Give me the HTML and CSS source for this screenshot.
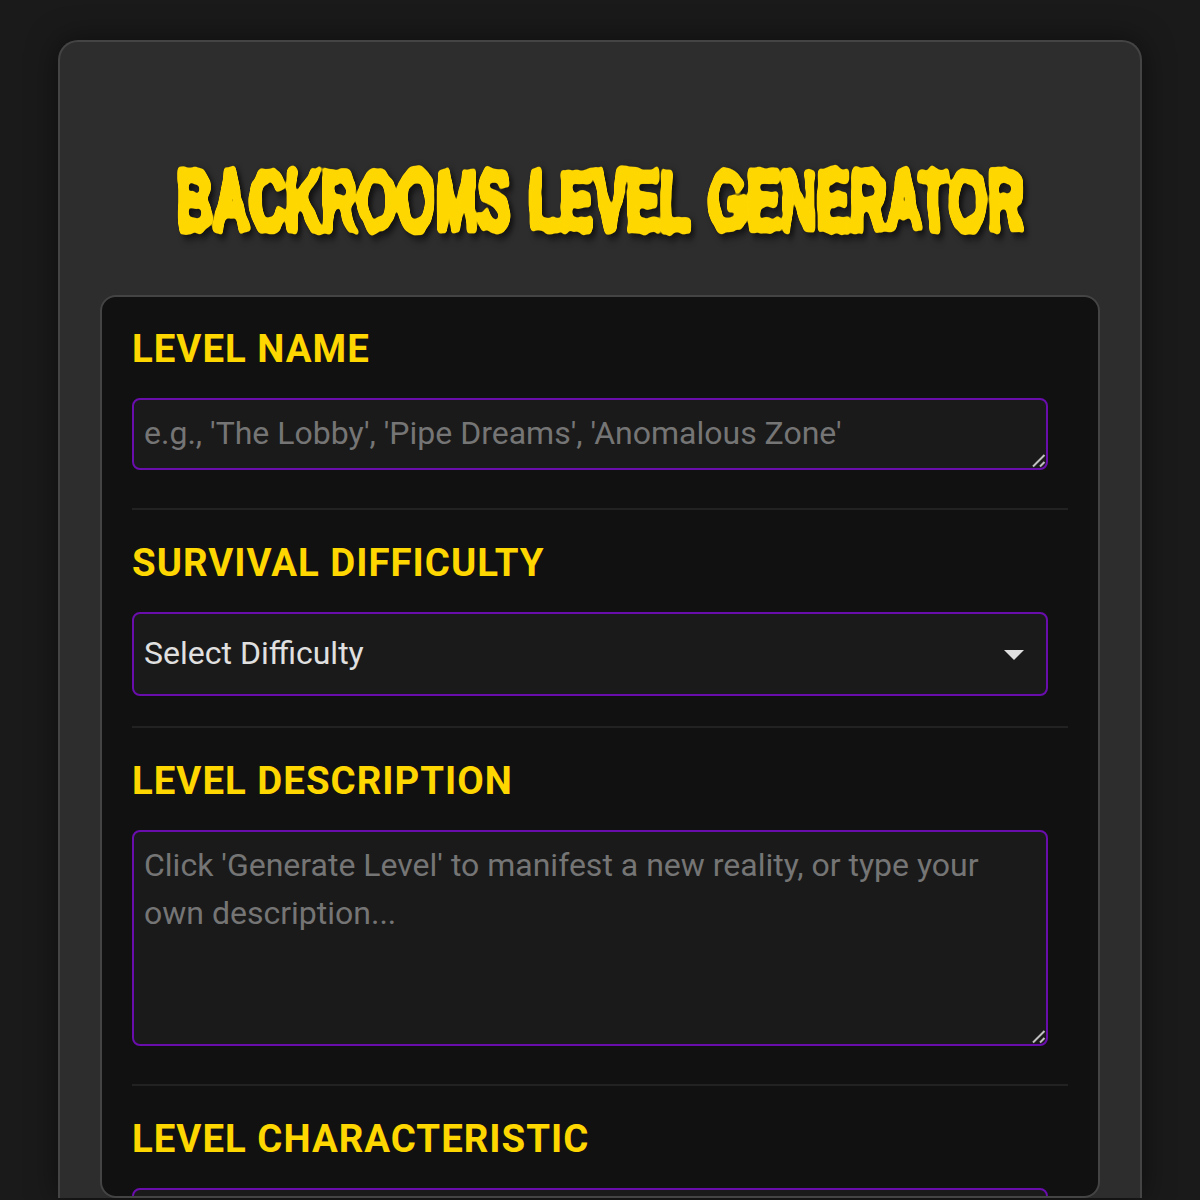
FILE: index.html
```html
<!DOCTYPE html>
<html>
<head>
    <meta charset="UTF-8">
    <meta name="viewport" content="width=device-width, initial-scale=1.0">
    <title>Backrooms Level Generator</title>
    <link rel="stylesheet" href="styles.css">
</head>
<body>
    <svg class="filter-defs" width="0" height="0">
        <filter id="drip" x="-5%" y="-25%" width="110%" height="150%" color-interpolation-filters="sRGB">
            <feTurbulence type="fractalNoise" baseFrequency="0.07 0.03" numOctaves="2" seed="11" result="noise"/>
            <feDisplacementMap in="SourceGraphic" in2="noise" scale="10" xChannelSelector="R" yChannelSelector="G" result="moved"/>
            <feGaussianBlur in="moved" stdDeviation="2.4" result="soft"/>
            <feComponentTransfer in="soft" result="blob">
                <feFuncA type="linear" slope="6" intercept="-2.1"/>
            </feComponentTransfer>
            <feDropShadow in="blob" dx="6" dy="4" stdDeviation="4" flood-color="#000" flood-opacity="0.6"/>
        </filter>
    </svg>
    <div class="container">
        <h1 class="title"><span>Backrooms Level Generator</span></h1>
        <div class="panel">
            <div class="section">
                <label class="field-label">Level Name</label>
                <textarea class="field" rows="1" placeholder="e.g., 'The Lobby', 'Pipe Dreams', 'Anomalous Zone'"></textarea>
            </div>
            <div class="section">
                <label class="field-label">Survival Difficulty</label>
                <div class="select-wrap">
                    <select class="field">
                        <option>Select Difficulty</option>
                    </select>
                </div>
            </div>
            <div class="section">
                <label class="field-label">Level Description</label>
                <textarea class="field" rows="4" placeholder="Click 'Generate Level' to manifest a new reality, or type your own description..."></textarea>
            </div>
            <div class="section">
                <label class="field-label">Level Characteristic</label>
                <textarea class="field" rows="2"></textarea>
            </div>
        </div>
    </div>
</body>
</html>
```

FILE: styles.css
```css
* {
    box-sizing: border-box;
}
html, body {
    height: 1200px;
    overflow: hidden;
}
body {
    margin: 0;
    padding: 40px 58px 0;
    background: #1a1a1a;
    color: #e0e0e0;
    font-family: Roboto, "Liberation Sans", sans-serif;
}
.filter-defs {
    position: absolute;
}
.container {
    height: 1158px;
    padding: 108px 40px 0;
    overflow: hidden;
    background: #2d2d2d;
    border: 2px solid #444;
    border-bottom: none;
    border-radius: 20px 20px 0 0;
    box-shadow: 0 0 30px rgba(0,0,0,0.5);
}
.title {
    margin: 0 0 45px;
    height: 100px;
    display: flex;
    align-items: center;
    justify-content: center;
    color: #ffd700;
    font-family: "Liberation Sans", sans-serif;
    font-size: 86px;
    font-weight: 700;
    word-spacing: 8px;
    text-transform: uppercase;
    white-space: nowrap;
}
.title span {
    flex: none;
    transform: scaleX(0.582);
    filter: url(#drip);
    -webkit-text-stroke: 6px #ffd700;
}
.panel {
    height: 903px;
    padding: 30px 30px 0;
    overflow: hidden;
    background: #111;
    border: 2px solid #444;
    border-radius: 16px;
}
.section {
    margin-bottom: 31px;
    border-bottom: 2px solid #222;
}
.field-label {
    display: block;
    margin-bottom: 27px;
    color: #ffd700;
    font-size: 38.4px;
    line-height: 44px;
    font-weight: 700;
    letter-spacing: 1px;
    text-transform: uppercase;
}
.field {
    display: block;
    width: 916px;
    margin-bottom: 38px;
    padding: 9px 10px 11px;
    background: #1a1a1a;
    color: #e0e0e0;
    border: 2px solid #6a0dad;
    border-radius: 8px;
    font-family: inherit;
    font-size: 32px;
    line-height: 48px;
    outline: none;
    resize: vertical;
}
.field::placeholder {
    color: #757575;
}
.field::-webkit-resizer {
    background: url("data:image/svg+xml,%3Csvg xmlns='http://www.w3.org/2000/svg' width='15' height='15'%3E%3Cpath d='M2 13.5 13.5 2M9 13.5 13.5 9' stroke='%23c0c0c0' stroke-width='2' fill='none'/%3E%3C/svg%3E") no-repeat;
}
.select-wrap {
    position: relative;
    width: 916px;
}
.select-wrap:after {
    content: '';
    position: absolute;
    right: 24px;
    top: 38px;
    border-style: solid;
    border-width: 10px 10px 0 10px;
    border-color: #e0e0e0 transparent transparent transparent;
}
select.field {
    height: 84px;
    margin-bottom: 30px;
    appearance: none;
    -webkit-appearance: none;
}
```
